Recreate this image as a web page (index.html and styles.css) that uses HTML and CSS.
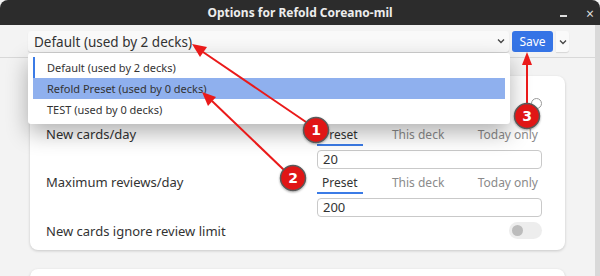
FILE: index.html
```html
<!DOCTYPE HTML>
<html>

<head>
    <meta charset="UTF-8">
    <title>Options for Refold Coreano-mil</title>
    <meta name="viewport" content="width=device-width, initial-scale=1">
    <link rel="stylesheet" href="styles.css">
</head>

<body>
    <div class="window">
        <div class="titlebar">
            <span class="title">Options for Refold Coreano-mil</span>
            <span class="winbtn min"></span>
            <span class="winbtn close">×</span>
        </div>
        <div class="main">
            <div class="page">
                <div class="toolbar">
                    <div class="select">
                        <span>Default (used by 2 decks)</span>
                        <svg class="chev" width="8" height="6" viewBox="0 0 8 6"><path d="M1 1.5 L4 4.5 L7 1.5" fill="none" stroke="#444" stroke-width="1.3"/></svg>
                    </div>
                    <button class="save">Save</button>
                    <div class="more">
                        <svg width="8" height="6" viewBox="0 0 8 6"><path d="M1 1.5 L4 4.5 L7 1.5" fill="none" stroke="#444" stroke-width="1.3"/></svg>
                    </div>
                </div>
                <div class="content">
                    <div class="card">
                        <div class="card-head">
                            <span class="help"></span>
                        </div>
                        <div class="row">
                            <div class="label">New cards/day</div>
                            <div class="field">
                                <div class="tabs">
                                    <span class="tab active">Preset</span>
                                    <span class="tab">This deck</span>
                                    <span class="tab">Today only</span>
                                </div>
                                <div class="input">20</div>
                            </div>
                        </div>
                        <div class="row">
                            <div class="label">Maximum reviews/day</div>
                            <div class="field">
                                <div class="tabs">
                                    <span class="tab active">Preset</span>
                                    <span class="tab">This deck</span>
                                    <span class="tab">Today only</span>
                                </div>
                                <div class="input">200</div>
                            </div>
                        </div>
                        <div class="row center">
                            <div class="label">New cards ignore review limit</div>
                            <div class="field">
                                <div class="toggle"><span class="knob"></span></div>
                            </div>
                        </div>
                    </div>
                    <div class="card next"></div>
                </div>
            </div>
            <div class="scrollbar"></div>
        </div>
    </div>

    <!-- open preset menu -->
    <div class="popup">
        <div class="item current">Default (used by 2 decks)</div>
        <div class="item hover">Refold Preset (used by 0 decks)</div>
        <div class="item">TEST (used by 0 decks)</div>
    </div>

    <!-- annotations -->
    <svg class="marks" width="600" height="276" viewBox="0 0 600 276">
        <defs>
            <filter id="sh" x="-50%" y="-50%" width="200%" height="200%">
                <feDropShadow dx="0" dy="1" stdDeviation="1.2" flood-color="#000" flood-opacity="0.35"/>
            </filter>
        </defs>
        <g stroke="#ea1a1a" stroke-width="2">
            <line x1="306" y1="122" x2="203" y2="52"/>
            <line x1="284" y1="170" x2="212" y2="101"/>
            <line x1="527" y1="104" x2="527" y2="64"/>
        </g>
        <g fill="#ea1a1a">
            <polygon points="192,44 207,47 200,57"/>
            <polygon points="202,92 216,97 208,106"/>
            <polygon points="527,52 532,65 522,65"/>
        </g>
        <g filter="url(#sh)" fill="#e01414" stroke="#5a5a5a" stroke-width="1.5">
            <circle cx="316" cy="130" r="12.5"/>
            <circle cx="293" cy="178" r="12.5"/>
            <circle cx="527" cy="116" r="12.5"/>
        </g>
        <g class="num" fill="#fff" text-anchor="middle">
            <text x="316" y="135">1</text>
            <text x="293" y="183">2</text>
            <text x="527" y="121">3</text>
        </g>
    </svg>
</body>

</html>
```

FILE: styles.css
```css
html {
    background: #f3f3f3;
}

body {
    margin: 0;
    width: 600px;
    height: 276px;
    overflow: hidden;
    position: relative;
    font-family: "Noto Sans", "Open Sans", sans-serif;
    color: #333;
}

.window {
    display: flex;
    flex-direction: column;
    height: 276px;
}

.titlebar {
    height: 25px;
    flex: none;
    background-color: #2c2c2c;
    border-radius: 8px 8px 0 0;
    display: flex;
    align-items: center;
    justify-content: center;
    position: relative;
}

.title {
    color: #ececec;
    font-size: 12px;
    font-weight: bold;
}

.winbtn {
    position: absolute;
    color: #ddd;
}

.min {
    left: 560px;
    top: 15px;
    width: 7px;
    height: 1.5px;
    background: #ddd;
}

.close {
    left: 586px;
    top: 4px;
    font-size: 14px;
}

.main {
    flex: 1;
    display: flex;
    min-height: 0;
}

.page {
    flex: 1;
    min-width: 0;
}

.scrollbar {
    width: 5px;
    background: #d9d9d9;
}

.toolbar {
    height: 33px;
    box-sizing: border-box;
    border-bottom: 1px solid #d8d8d8;
    padding: 6px 0 0 28px;
    display: flex;
    align-items: flex-start;
}

.select {
    width: 481px;
    height: 21px;
    box-sizing: border-box;
    background: #f9f9f9;
    border-radius: 3px;
    box-shadow: 0 1px 1px rgba(0, 0, 0, .15);
    display: flex;
    align-items: center;
    justify-content: space-between;
    padding: 0 4px 0 6px;
    font-size: 13.5px;
}

.chev {
    margin-bottom: 1px;
}

.save {
    margin-left: 3px;
    width: 41px;
    height: 21px;
    border: none;
    border-radius: 3px;
    background-color: #3574e6;
    color: #fff;
    font-family: inherit;
    font-size: 12px;
    padding: 0;
}

.more {
    margin-left: 3px;
    width: 13px;
    height: 21px;
    background: #fafafa;
    border-radius: 0 3px 3px 0;
    box-shadow: 0 1px 1px rgba(0, 0, 0, .12);
    display: flex;
    align-items: center;
    justify-content: center;
}

.content {
    padding: 18px 30px 0 30px;
}

.card {
    background: #fff;
    border-radius: 8px;
    box-shadow: 0 1px 3px rgba(0, 0, 0, .18);
    padding: 0 23px 11px 16px;
}

.card.next {
    margin-top: 19px;
    height: 20px;
    padding: 0;
}

.card-head {
    height: 45px;
    display: flex;
    align-items: center;
    justify-content: flex-end;
}

.help {
    width: 9px;
    height: 9px;
    border: 1px solid #999;
    border-radius: 50%;
    margin: 10px 0 0 0;
}

.row {
    display: grid;
    grid-template-columns: 271px 225px;
    margin-top: 5px;
}

.row.center {
    align-items: center;
}

.label {
    font-size: 13px;
    line-height: 16px;
}

.tabs {
    display: flex;
    justify-content: space-between;
    font-size: 12px;
    line-height: 18px;
}

.tab {
    padding: 0 4px 0 5px;
    color: #8a8a8a;
    border-bottom: 2px solid transparent;
}

.tab.active {
    color: #333;
    border-bottom-color: #3b7be6;
    padding-right: 5px;
}

.input {
    margin-top: 4px;
    height: 19px;
    box-sizing: border-box;
    border: 1px solid #c9c9c9;
    border-radius: 4px;
    padding-left: 5px;
    font-size: 13px;
    line-height: 17px;
}

.toggle {
    margin-left: 192px;
    width: 33px;
    height: 17px;
    border-radius: 9px;
    background: #ededed;
    display: flex;
    align-items: center;
}

.knob {
    width: 11px;
    height: 11px;
    border-radius: 50%;
    background: #bcbcbc;
    margin-left: 3px;
}

.popup {
    position: absolute;
    left: 28px;
    top: 53px;
    width: 482px;
    height: 71px;
    box-sizing: border-box;
    background: #fff;
    border-radius: 3px;
    box-shadow: 0 9px 22px rgba(0, 0, 0, .3);
    padding: 4px 5px 0 5px;
    font-size: 11px;
}

.item {
    height: 21px;
    line-height: 21px;
    padding-left: 14px;
}

.item.current {
    box-shadow: inset 2px 0 0 #3b7be6;
}

.item.hover {
    background: #8fb0ee;
}

.marks {
    position: absolute;
    left: 0;
    top: 0;
}

.num {
    font-family: "DejaVu Sans", sans-serif;
    font-size: 14px;
    font-weight: bold;
}
```
